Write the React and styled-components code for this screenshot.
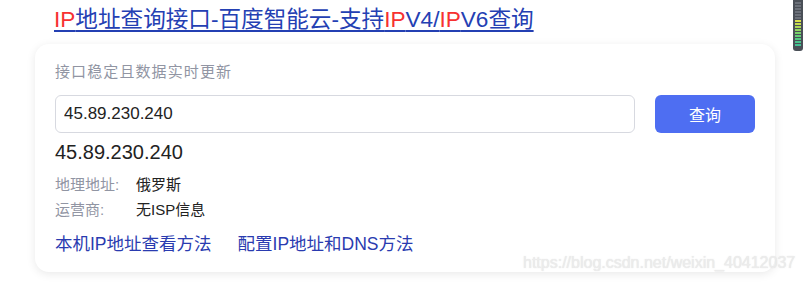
import React from 'react';
import styled, { createGlobalStyle } from 'styled-components';

const GlobalStyle = createGlobalStyle`
  html, body {
    margin: 0;
    padding: 0;
    background: #ffffff;
  }
  body {
    font-family: "Liberation Sans", Arial, "Noto Sans CJK SC", sans-serif;
    color: #222222;
  }
`;

const Page = styled.div`
  position: relative;
  width: 804px;
  height: 282px;
  overflow: hidden;
`;

const Title = styled.a`
  display: block;
  padding: 4px 0 0 54px;
  margin-bottom: 8px;
  font-size: 22.6px;
  line-height: 32px;
  color: #2440b3;
  text-decoration: underline;
  text-underline-offset: 3px;

  em {
    font-style: normal;
    color: #f73131;
  }
`;

const Card = styled.div`
  width: 740px;
  margin-left: 35px;
  box-sizing: border-box;
  padding: 18px 20px 16px;
  background: #fff;
  border-radius: 14px;
  box-shadow: 0 2px 10px rgba(0, 0, 0, 0.09);
`;

const Subtitle = styled.div`
  font-size: 15px;
  line-height: 20px;
  letter-spacing: 1.1px;
  color: #9195a3;
`;

const SearchRow = styled.div`
  display: flex;
  gap: 20px;
  margin-top: 13px;
`;

const Input = styled.input`
  flex: 1;
  height: 38px;
  box-sizing: border-box;
  padding: 0 8px;
  border: 1px solid #d7d9e0;
  border-radius: 6px;
  font-family: inherit;
  font-size: 17px;
  color: #222;
  outline: none;
`;

const SearchButton = styled.button`
  width: 100px;
  height: 38px;
  border: none;
  border-radius: 6px;
  background: #4e6ef2;
  color: #fff;
  font-family: inherit;
  font-size: 16px;
  cursor: pointer;
`;

const ResultIp = styled.div`
  margin-top: 6px;
  font-size: 20px;
  line-height: 26px;
  color: #222;
`;

const InfoRow = styled.div`
  display: flex;
  font-size: 15px;
  line-height: 25px;
  margin-top: ${p => p.$first ? '7px' : '0'};
`;

const Label = styled.span`
  width: 81px;
  color: #9195a3;
`;

const Value = styled.span`
  color: #222;
`;

const Links = styled.div`
  display: flex;
  gap: 26px;
  margin-top: 10px;
  font-size: 17.5px;
  line-height: 24px;
`;

const TextLink = styled.a`
  color: #2a3bb0;
  text-decoration: none;
`;

const Watermark = styled.div`
  position: absolute;
  left: 523px;
  top: 253px;
  font-family: "Liberation Sans", Arial, sans-serif;
  font-size: 16px;
  line-height: 20px;
  color: #ececec;
  text-shadow: 0 0 1px rgba(190, 190, 190, 0.5);
  pointer-events: none;
`;

const Meter = styled.svg`
  position: absolute;
  right: 1px;
  top: 0;
`;

const meterColors = [
  '#6b7079', '#6b7079', '#6b7079', '#6b7079', '#6b7079', '#6b7079',
  '#d9e04a', '#c6dc4e', '#a9d856', '#8fd45f', '#78d06a', '#62cc75', '#52c880', '#4ac48b', '#44c094',
];

function LevelMeter() {
  return (
    <Meter width="10" height="52" viewBox="0 0 10 52">
      <rect x="0" y="-6" width="10" height="57" rx="3" fill="#4a4f57" />
      {meterColors.map((c, i) => (
        <rect key={i} x="2" y={2 + i * 3} width="6" height="2" fill={c} />
      ))}
    </Meter>
  );
}

export default function App() {
  return (
    <Page>
      <GlobalStyle />
      <Title href="#">
        <em>IP</em>地址查询接口-百度智能云-支持<em>IP</em>V4/<em>IP</em>V6查询
      </Title>
      <Card>
        <Subtitle>接口稳定且数据实时更新</Subtitle>
        <SearchRow>
          <Input defaultValue="45.89.230.240" />
          <SearchButton>查询</SearchButton>
        </SearchRow>
        <ResultIp>45.89.230.240</ResultIp>
        <InfoRow $first>
          <Label>地理地址:</Label>
          <Value>俄罗斯</Value>
        </InfoRow>
        <InfoRow>
          <Label>运营商:</Label>
          <Value>无ISP信息</Value>
        </InfoRow>
        <Links>
          <TextLink href="#">本机IP地址查看方法</TextLink>
          <TextLink href="#">配置IP地址和DNS方法</TextLink>
        </Links>
      </Card>
      <Watermark>https://blog.csdn.net/weixin_40412037</Watermark>
      <LevelMeter />
    </Page>
  );
}
